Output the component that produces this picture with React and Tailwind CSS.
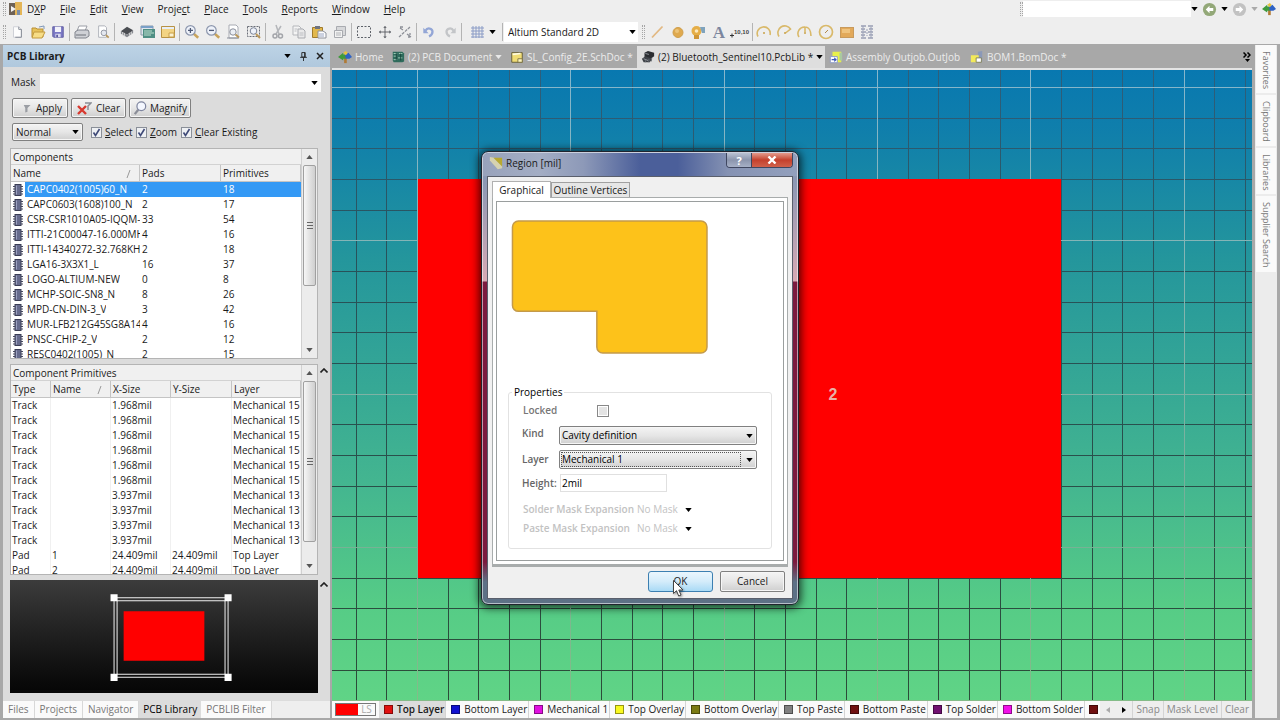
import React from "react";

const BUTTON =
  "flex items-center rounded-[2px] border border-[#808080] bg-gradient-to-b from-[#f4f4f4] via-[#e6e6e6] to-[#cfcfcf] shadow-[inset_0_0_0_1px_#f6f6f6]";

function Svg({ children, className = "size-4" }) {
  return (
    <svg viewBox="0 0 16 16" fill="none" aria-hidden="true" className={`shrink-0 ${className}`}>
      {children}
    </svg>
  );
}

function Caret({ className = "text-black" }) {
  return (
    <svg viewBox="0 0 7 4" aria-hidden="true" className={`h-1 w-[7px] shrink-0 ${className}`}>
      <path d="M0.3 0h6.4L3.5 4z" fill="currentColor" />
    </svg>
  );
}

/* ---------- icons ---------- */

const Arc = ({ d }) => (
  <Svg>
    <path d={d} stroke="#d9b96a" strokeWidth="1.6" />
    <circle cx="8" cy="9" r="1" fill="#c9a24a" />
  </Svg>
);

const Zoomer = ({ children }) => (
  <Svg>
    <path d="M9.6 9.6l4.6 4.2" stroke="#c9a45c" strokeWidth="2.6" />
    <circle cx="6.4" cy="6.4" r="4.8" fill="#eef2fa" stroke="#8d97ad" strokeWidth="1.2" />
    {children}
  </Svg>
);

const PcbIcon = () => (
  <Svg className="size-[14px]">
    <path d="M2 2h11l2 2v9l-2 1H3l-1-2z" fill="#2f6b5c" />
    <path d="M3 4h4M3 7h3M9 4h4M8 9h5M3 11h4" stroke="#a9d6c0" />
    <path d="M6 3v9M11 4v8" stroke="#17463b" />
  </Svg>
);

const HomeIcon = () => (
  <Svg className="size-[14px]">
    <path d="M7 7h3v8H7z" fill="#b07a35" />
    <path d="M0 8l6-5v2h3v5H6v2z" fill="#3f9a3c" />
    <path d="M16 8l-4-5-4 3 1 4h4z" fill="#2e62c4" />
    <path d="M6 3l3-2 2 2-2 3z" fill="#e8c33c" />
  </Svg>
);

const ChipStack = () => (
  <Svg className="size-[14px]">
    <path d="M1 7l7-5 7 4-7 5z" fill="#4a4d52" />
    <path d="M1 7v3l7 4v-3zM15 6v3l-7 5v-3z" fill="#85888e" />
    <path d="M3 8v4M5 9v4M11 9v3M13 8v3" stroke="#dcdcdc" />
  </Svg>
);

const LibIcon = () => (
  <Svg className="size-[14px]">
    <path d="M4 3l4-2 7 2v4l-4 3-7-2z" fill="#2b2d31" />
    <path d="M1 10l4-3 8 3-3 4H3z" fill="#3d4046" />
    <path d="M5 4l4 1M3 10l5 2" stroke="#9da1a8" />
    <path d="M12 9v4M9 10v4M5 11v3" stroke="#6b6f76" />
  </Svg>
);

const ChipIcon = () => (
  <svg viewBox="0 0 10 12" aria-hidden="true" className="h-3 w-[10px] shrink-0">
    <path d="M0 2.5h10M0 5h10M0 7.5h10M0 10h10" stroke="#4a4d63" />
    <rect x="2" y="0.5" width="6" height="11" fill="#666b8c" stroke="#3b3e55" />
    <path d="M3.5 1.5v9" stroke="#9ba0bf" />
  </svg>
);

const Undo = ({ color, flip }) => (
  <Svg className={flip ? "size-[14px] -scale-x-100" : "size-[14px]"}>
    <path d="M4 6.500c2-4 8-3 8 1.200 0 2.600-1.500 4.200-4 5.300" stroke={color} strokeWidth="2.600" />
    <path d="M1.500 3v6.500h6z" fill={color} />
  </Svg>
);

const ICONS = {
  newDoc: (
    <Svg className="size-[14px]">
      <path d="M4 2h6l3 3v9H4z" fill="#fdfdfd" stroke="#c9ccd2" />
      <path d="M10 2v3h3M13 5v9H6" stroke="#7d828e" />
    </Svg>
  ),
  open: (
    <Svg>
      <path d="M2 4h4l1 1h6v8H2z" fill="#e7c25a" stroke="#b98f35" />
      <path d="M4 8h11l-3 6H2z" fill="#f7dd86" stroke="#c29a3f" />
      <path d="M9 3l5-1v3" stroke="#7f97b8" />
    </Svg>
  ),
  save: (
    <Svg className="size-[14px]">
      <path d="M2 2h12v12H3l-1-1z" fill="#7a78c4" stroke="#5b599f" />
      <path d="M4.500 2h7v6h-7z" fill="#f2f2fa" />
      <path d="M5 10h6v4H5z" fill="#d9d9ee" />
      <path d="M6 11h2v3H6z" fill="#5b599f" />
    </Svg>
  ),
  print: (
    <Svg>
      <path d="M5 2h8l-2 5H3z" fill="#fff" stroke="#9b9ea6" />
      <path d="M1 8l3-2h10l1 2v4l-3 2H1z" fill="#cfd1d6" stroke="#80848d" />
      <path d="M2 11h10" stroke="#6d7179" />
    </Svg>
  ),
  preview: (
    <Svg className="size-[14px]">
      <path d="M3 1h7l2 2v11H3z" fill="#fff" stroke="#a8abb3" />
      <circle cx="9" cy="9" r="3.200" fill="#e4e8f0" stroke="#8a8f9b" />
      <path d="M11.500 11.500l3 3" stroke="#b9975a" strokeWidth="2" />
    </Svg>
  ),
  layers: <ChipStack />,
  board: (
    <Svg>
      <path d="M1 2h12v9H1z" fill="#dfe6ee" stroke="#8b98a8" />
      <path d="M3 5h12v9H3z" fill="#4f8f84" />
      <path d="M4 7h8M4 9h10M4 11h7" stroke="#bfe0cf" />
      <path d="M1 3h12" stroke="#7aa0c8" strokeWidth="2" />
    </Svg>
  ),
  sheet: (
    <Svg>
      <path d="M1.500 2.500h13v11h-13z" fill="#f3d483" stroke="#b89243" />
      <path d="M2 4h12" stroke="#e7eef7" strokeWidth="2" />
      <path d="M9 9h5v4H9z" fill="#fbf1cf" stroke="#c9a04a" />
    </Svg>
  ),
  zoomIn: <Zoomer><path d="M4 6.400h5M6.400 4v5" stroke="#4f5a75" strokeWidth="1.300" /></Zoomer>,
  zoomOut: <Zoomer><path d="M4 6.400h5" stroke="#4f5a75" strokeWidth="1.300" /></Zoomer>,
  zoomDoc: (
    <Svg>
      <path d="M4 1h7l2 2v11H4z" fill="#fff" stroke="#a8abb3" />
      <circle cx="8" cy="8" r="3.200" fill="#eceff5" stroke="#8a8f9b" />
      <path d="M2 14h12" stroke="#8a8f9b" />
      <path d="M10.500 10.500l3.500 3" stroke="#b9975a" strokeWidth="2" />
    </Svg>
  ),
  zoomArea: (
    <Svg>
      <path d="M1.500 2.500h12v10h-12z" stroke="#6b6f78" strokeDasharray="2 1" />
      <circle cx="7.500" cy="7" r="3.300" fill="#eef2fa" stroke="#7d869a" />
      <path d="M10 10l4 4" stroke="#b9975a" strokeWidth="2" />
    </Svg>
  ),
  cut: (
    <Svg>
      <path d="M6 1l3 9M11 2L6 10" stroke="#b4b6ba" strokeWidth="1.500" />
      <circle cx="5" cy="12" r="2" stroke="#a3a5aa" strokeWidth="1.500" />
      <circle cx="10.500" cy="12" r="2" stroke="#a3a5aa" strokeWidth="1.500" />
    </Svg>
  ),
  copy: (
    <Svg>
      <path d="M2 2h6l2 2v7H2z" fill="#f4f4f4" stroke="#b5b7bb" />
      <path d="M7 5h5l2 2v7H7z" fill="#e9e9ea" stroke="#a9abb0" />
      <path d="M8.500 9h4M8.500 11h4M3.500 5h3M3.500 7h2" stroke="#bcbec2" />
    </Svg>
  ),
  paste: (
    <Svg>
      <path d="M1.500 3.500h10v10h-10z" fill="#e2b84c" stroke="#a07b2d" />
      <path d="M4 2h5v3H4z" fill="#6f7480" />
      <path d="M7 7h5l3 2v5H7z" fill="#fdfdfd" stroke="#8d919b" />
      <path d="M8 10h5M8 12h5" stroke="#9aa6c4" />
    </Svg>
  ),
  pasteGrey: (
    <Svg>
      <path d="M4.500 2.500h9v9h-9z" fill="#d7d8da" stroke="#a9abb0" />
      <path d="M2.500 6.500h8v7h-8z" fill="#f2f2f2" stroke="#a9abb0" />
      <path d="M4 9h5M4 11h5" stroke="#b2b4b8" />
    </Svg>
  ),
  marquee: <Svg><path d="M1.500 2.500h13v11h-13z" stroke="#5d6168" strokeDasharray="2 1.500" /></Svg>,
  move: (
    <Svg className="size-[14px]">
      <path d="M8 2v12M2 8h12" stroke="#55585f" />
      <path d="M8 1l2 2H6zM8 15l2-2H6zM1 8l2-2v4zM15 8l-2-2v4z" fill="#55585f" />
    </Svg>
  ),
  deselect: (
    <Svg>
      <path d="M2 13L13 3" stroke="#8d9098" strokeWidth="1.300" strokeDasharray="3 1" />
      <path d="M3 4l3 2M10 10l4 3M11 13h2M3 3h3M13 9v2" stroke="#8d9098" strokeWidth="1.300" />
    </Svg>
  ),
  undo: <Undo color="#93a6d6" />,
  redo: <Undo color="#c3c5c8" flip />,
  grid: (
    <Svg>
      <path d="M4 2v12M7 2v12M10 2v12M13 2v12M2 4h13M2 7h13M2 10h13M2 13h13" stroke="#8b9cc6" />
    </Svg>
  ),
  line: <Svg><path d="M3 13.500L13.500 2.500" stroke="#e2b882" strokeWidth="1.800" /></Svg>,
  pad: <Svg><circle cx="8" cy="8.500" r="5" fill="#dfa94e" stroke="#cf9f4c" /><circle cx="7" cy="7" r="2" fill="#ecc47a" /></Svg>,
  via: (
    <Svg>
      <circle cx="6.500" cy="7" r="5" fill="#e5ae48" />
      <path d="M4 11h5v4H4z" fill="#cf9638" />
      <circle cx="6.500" cy="7" r="1.800" fill="#fbe9c0" />
      <path d="M10 3h5v6h-3z" fill="#7fa3bd" />
    </Svg>
  ),
  textA: (
    <svg viewBox="0 0 16 16" aria-hidden="true" className="size-4 shrink-0">
      <text x="8" y="14" textAnchor="middle" fontFamily="Liberation Serif, serif" fontWeight="700" fontSize="17" fill="#7c879f">A</text>
    </svg>
  ),
  coord: (
    <svg viewBox="0 0 20 16" aria-hidden="true" className="h-4 w-5 shrink-0">
      <path d="M0 11.500h4M2 9.500v4" stroke="#333" />
      <text x="4" y="10" fontFamily="Liberation Sans, sans-serif" fontWeight="700" fontSize="6" fill="#444">10,10</text>
    </svg>
  ),
  arc1: <Arc d="M2 12.500A6.500 6.500 0 1 1 14 11" />,
  arc2: <Arc d="M2 12.500A6.500 6.500 0 0 1 13.500 5l-5 4" />,
  arc3: <Arc d="M2 13A6.500 6.500 0 0 1 8 3c4 0 6 4 6 9M8 3v5" />,
  circle: (
    <Svg>
      <circle cx="8" cy="8" r="6.500" stroke="#d9b96a" strokeWidth="1.700" />
      <path d="M7 9l3-3" stroke="#b0894a" />
    </Svg>
  ),
  fill: <Svg><rect x="1.500" y="3.500" width="13" height="10" fill="#e2a95a" stroke="#c89a5c" /><path d="M3 5h8v4H3z" fill="#efc37e" /></Svg>,
  array: (
    <Svg>
      <path d="M2 2h5M2 5h4M2 8h5M2 11h4M2 14h5M9 2h5M10 5h4M9 8h5M10 11h4M9 14h5" stroke="#6f7796" />
      <path d="M4 2v12M12 3v11M8 5v7" stroke="#9aa1b8" strokeDasharray="2 1" />
    </Svg>
  ),
};

const TOOLBAR_LEFT = [
  ["newDoc", "open", "save"],
  ["print", "preview"],
  ["layers", "board", "sheet"],
  ["zoomIn", "zoomOut", "zoomDoc", "zoomArea"],
  ["cut", "copy", "paste", "pasteGrey"],
  ["marquee", "move", "deselect"],
  ["undo", "redo"],
];
const TOOLBAR_RIGHT = [
  ["line", "pad", "via", "textA", "coord"],
  ["arc1", "arc2", "arc3", "circle", "fill", "array"],
];

const Grip = () => <span className="h-[14px] w-[3px] shrink-0 border-x border-dotted border-[#a5a5a5]" />;
const Divider = () => <span className="h-[18px] w-px shrink-0 bg-[#b4b4b4]" />;

function ToolGroup({ names }) {
  return (
    <div className="flex">
      {names.map((n) => (
        <button key={n} aria-label={n} className="flex h-5 w-[21px] items-center justify-center [&:nth-child(3n)]:w-5">
          {ICONS[n]}
        </button>
      ))}
    </div>
  );
}

const MENUS = [
  ["D", "X", "P"], ["", "F", "ile"], ["", "E", "dit"], ["", "V", "iew"], ["Proje", "c", "t"],
  ["", "P", "lace"], ["", "T", "ools"], ["", "R", "eports"], ["", "W", "indow"], ["", "H", "elp"],
];

function NavArrow({ color, flip }) {
  return (
    <Svg className={flip ? "size-[15px] -scale-x-100" : "size-[15px]"}>
      <circle cx="8" cy="8" r="7" fill={color} />
      <path d="M8 4L4 8l4 4V9.500h4v-3H8z" fill="#fff" />
    </Svg>
  );
}

function MenuBar() {
  return (
    <div className="flex h-[18px] items-center pl-[3px]">
      <Grip />
      <nav className="flex items-center leading-4">
        <Svg className="ml-[2px] mr-[3px] size-4">
          <path d="M1 2h9v12H1z" fill="#6e6257" />
          <path d="M7 1h7v13H7z" fill="#e4b557" />
          <path d="M3 5l5 3-5 3z" fill="#f3f3f3" />
          <path d="M9 9h3v5H9z" fill="#7c8ea8" />
        </Svg>
        <div className="flex gap-[14px]">
          {MENUS.map(([a, u, b]) => (
            <button key={a + u + b}>
              {a}<span className="underline underline-offset-1">{u}</span>{b}
            </button>
          ))}
        </div>
      </nav>
      <div className="ml-auto flex h-full items-center pr-1">
        <Grip />
        <input aria-label="Address" className="h-4 w-[168px] bg-white" />
        <div className="flex h-full items-center gap-1">
          <Caret />
          <NavArrow color="#93a878" />
          <Caret />
          <NavArrow color="#c2c2c2" flip />
          <Caret className="text-[#aaa]" />
          <HomeIcon />
        </div>
      </div>
    </div>
  );
}

function Toolbar() {
  return (
    <div className="flex h-[26px] items-center pl-[3px] pt-px">
      <Grip />
      {TOOLBAR_LEFT.map((g, i) => (
        <React.Fragment key={i}>
          {i > 0 && <span className="px-px"><span className="block h-[18px] w-px bg-[#b4b4b4]" /></span>}
          <ToolGroup names={g} />
        </React.Fragment>
      ))}
      <span className="px-px"><span className="block h-[18px] w-px bg-[#b4b4b4]" /></span>
      <button aria-label="Grid" className="flex w-[39px] items-center justify-center gap-1">
        {ICONS.grid}<Caret />
      </button>
      <Divider />
      <div className="relative ml-px w-[134px]">
        <select aria-label="View configuration" className="h-[20px] w-full appearance-none bg-white pl-1 leading-5">
          <option>Altium Standard 2D</option>
        </select>
        <span className="pointer-events-none absolute right-[2px] top-2"><Caret /></span>
      </div>
      <span className="ml-1 mr-px"><span className="block h-[14px] w-[3px] border-x border-dotted border-[#a5a5a5]" /></span>
      <ToolGroup names={TOOLBAR_RIGHT[0]} />
      <span className="pl-[2px]"><span className="block h-[18px] w-px bg-[#b4b4b4]" /></span>
      <ToolGroup names={TOOLBAR_RIGHT[1]} />
    </div>
  );
}

/* ---------- library panel ---------- */

const COMPONENTS = [
  ["CAPC0402(1005)60_N", 2, 18], ["CAPC0603(1608)100_N", 2, 17], ["CSR-CSR1010A05-IQQM-", 33, 54],
  ["ITTI-21C00047-16.000MHZ", 4, 16], ["ITTI-14340272-32.768KHZ", 2, 18], ["LGA16-3X3X1_L", 16, 37],
  ["LOGO-ALTIUM-NEW", 0, 8], ["MCHP-SOIC-SN8_N", 8, 26], ["MPD-CN-DIN-3_V", 3, 42],
  ["MUR-LFB212G45SG8A143", 4, 16], ["PNSC-CHIP-2_V", 2, 12], ["RESC0402(1005)_N", 2, 15],
];

const track = (size, layer) => ["Track", "", size, "", layer];
const PRIMITIVES = [
  ...Array.from({ length: 6 }, () => track("1.968mil", "Mechanical 15")),
  ...Array.from({ length: 4 }, () => track("3.937mil", "Mechanical 13")),
  ["Pad", "1", "24.409mil", "24.409mil", "Top Layer"],
  ["Pad", "2", "24.409mil", "24.409mil", "Top Layer"],
];

function ScrollBar({ thumb }) {
  return (
    <div aria-hidden="true" className="flex w-4 shrink-0 flex-col items-center border-l border-[#d0d0d0] bg-[#ececec]">
      <span className="flex h-4 shrink-0 items-center"><Caret className="rotate-180 text-[#555]" /></span>
      <span className={`flex w-[13px] items-center justify-center rounded-[2px] border border-[#a0a0a0] bg-gradient-to-r from-[#f6f6f6] to-[#cfcfcf] ${thumb}`}>
        <span className="h-[7px] w-[6px] border-y border-[#666] py-[2px]"><span className="block h-px bg-[#666]" /></span>
      </span>
      <span className="mt-auto flex h-4 shrink-0 items-center"><Caret className="text-[#555]" /></span>
    </div>
  );
}

const TH = "border-b border-r border-[#c4c4c4] bg-[#f0f0f0] p-0 pl-[2px] text-left font-normal";

function SortTh({ children }) {
  return (
    <th className={TH}>
      <span className="flex justify-between pr-2">
        {children}
        <svg viewBox="0 0 5 8" aria-hidden="true" className="mt-1 h-2 w-[5px]"><path d="M1 8L4 0" stroke="#999" /></svg>
      </span>
    </th>
  );
}

function ListBox({ title, thumb, children }) {
  return (
    <div className="flex h-[211px] shrink-0 border border-[#b4b4b4] bg-white">
      <div className="min-w-0 flex-1 overflow-hidden">
        <h2 className="h-4 border-b border-[#d2d2d2] bg-[#f0f0f0] pl-[2px] leading-4">{title}</h2>
        {children}
      </div>
      <ScrollBar thumb={thumb} />
    </div>
  );
}

function Check({ label, u, className = "" }) {
  return (
    <label className={`flex items-center gap-[3px] ${className}`}>
      <span className="grid place-items-center">
        <input type="checkbox" defaultChecked className="peer col-start-1 row-start-1 size-[11px] appearance-none border border-[#8a8f98] bg-[#eef0f3]" />
        <svg viewBox="0 0 9 9" aria-hidden="true" className="pointer-events-none invisible col-start-1 row-start-1 size-[9px] peer-checked:visible">
          <path d="M1.500 4.500l2 3L7.500 1" fill="none" stroke="#3f4a78" strokeWidth="1.600" />
        </svg>
      </span>
      <span><span className="underline underline-offset-1">{u}</span>{label}</span>
    </label>
  );
}

const Chevron = () => (
  <svg viewBox="0 0 8 5" aria-hidden="true" className="h-[5px] w-2"><path d="M0.500 4.500L4 1l3.500 3.500" fill="none" stroke="#222" strokeWidth="1.600" /></svg>
);

function LibraryPanel() {
  return (
    <aside className="flex w-[332px] shrink-0 flex-col border-l-[3px] border-r-2 border-[#a8a8a8] bg-[#dcdcdc]">
      <header className="flex h-[22px] shrink-0 items-center bg-gradient-to-b from-[#bdd3e6] to-[#b0c8dd] pl-1 pr-[6px]">
        <h1 className="font-bold">PCB Library</h1>
        <div className="ml-auto flex items-center gap-2">
          <button aria-label="Menu"><Caret /></button>
          <button aria-label="Pin"><Svg className="size-[9px]"><path d="M5 1h6v8H5zM2 9.500h12M8 10v6M10 1v8" stroke="#222" strokeWidth="1.600" /></Svg></button>
          <button aria-label="Close"><Svg className="size-2"><path d="M2 2l12 12M14 2L2 14" stroke="#222" strokeWidth="3" /></Svg></button>
        </div>
      </header>

      <div className="flex h-[31px] shrink-0 items-center pl-2 pr-[9px]">
        <label htmlFor="mask" className="w-[29px]">Mask</label>
        <div className="flex h-[18px] flex-1 items-center bg-white pr-[3px]">
          <input id="mask" className="min-w-0 flex-1" />
          <button aria-label="Mask history"><Caret /></button>
        </div>
      </div>
      <div className="flex h-5 shrink-0 gap-[3px] pl-[9px] [&>button]:h-5">
        <button className={`${BUTTON} w-[56px] justify-end pr-[5px]`}>
          <Svg className="mr-1 size-3"><path d="M5 4h9l-4 4v5l-3 1V8z" fill="#9a9da3" /></Svg>Apply
        </button>
        <button className={`${BUTTON} w-[55px] justify-end pr-[5px]`}>
          <Svg className="mr-1 size-4"><path d="M2 6l8 8M10 6l-8 8" stroke="#d8392f" strokeWidth="2.400" /><path d="M9 3h6l-3 3v4" stroke="#8a8d95" strokeWidth="1.500" /></Svg>Clear
        </button>
        <button className={`${BUTTON} w-[62px] justify-end pr-[3px]`}>
          <Svg className="mr-[3px] size-[14px]"><path d="M6 10l-4 5" stroke="#8b8e98" strokeWidth="2.600" /><circle cx="9.500" cy="6" r="5" fill="#f4f7ff" stroke="#7f86a0" strokeWidth="1.400" /></Svg>Magnify
        </button>
      </div>
      <div className="mt-[5px] flex h-[18px] shrink-0 items-center pl-[9px]">
        <div className="relative mr-2 w-[71px]">
          <select aria-label="Mode" className={`${BUTTON} h-[18px] w-full appearance-none pl-[3px]`}>
            <option>Normal</option>
          </select>
          <span className="pointer-events-none absolute right-1 top-[7px]"><Caret /></span>
        </div>
        <Check u="S" label="elect" className="w-[45px]" />
        <Check u="Z" label="oom" className="w-[45px]" />
        <Check u="C" label="lear Existing" />
      </div>

      <div className="mt-[7px] flex min-h-0 flex-1 flex-col gap-[5px] pl-[7px]">
        <div className="flex shrink-0">
          <div className="w-[308px]">
            <ListBox title="Components" thumb="h-[121px]">
              <table className="w-full table-fixed border-separate border-spacing-0 leading-[15px]">
                <colgroup><col className="w-[129px]" /><col className="w-[81px]" /><col /></colgroup>
                <thead><tr className="h-[17px]"><SortTh>Name</SortTh><th className={TH}>Pads</th><th className={TH}>Primitives</th></tr></thead>
                <tbody>
                  {COMPONENTS.map(([name, pads, prims], i) => (
                    <tr key={name} className={i === 0 ? "bg-[#3399f5] text-white" : "bg-white"}>
                      <td className="overflow-hidden p-0">
                        <span className="flex h-[15px] items-center">
                          <span className={i === 0 ? "flex h-[15px] w-[14px] shrink-0 items-center bg-white pl-[2px]" : "flex h-[15px] w-[14px] shrink-0 items-center pl-[2px]"}><ChipIcon /></span>
                          <span className="min-w-0 overflow-hidden pl-[2px]">{name}</span>
                        </span>
                      </td>
                      <td className="p-0 pl-[2px]">{pads}</td>
                      <td className="p-0 pl-[2px]">{prims}</td>
                    </tr>
                  ))}
                </tbody>
              </table>
            </ListBox>
          </div>
        </div>
        <div className="flex shrink-0">
          <div className="w-[308px]">
            <ListBox title="Component Primitives" thumb="h-[161px]">
              <table className="w-full table-fixed border-separate border-spacing-0 leading-[15px]">
                <colgroup><col className="w-[40px]" /><col className="w-[60px]" /><col className="w-[60px]" /><col className="w-[61px]" /><col /></colgroup>
                <thead>
                  <tr className="h-[17px]">
                    <th className={TH}>Type</th><SortTh>Name</SortTh><th className={TH}>X-Size</th><th className={TH}>Y-Size</th><th className={TH}>Layer</th>
                  </tr>
                </thead>
                <tbody>
                  {PRIMITIVES.map((row, i) => (
                    <tr key={i} className="h-[15px]">
                      {row.map((c, j) => <td key={j} className="border-r border-[#f0f0f0] p-0 pl-px">{c}</td>)}
                    </tr>
                  ))}
                </tbody>
              </table>
            </ListBox>
          </div>
          <button aria-label="Collapse primitives" className="flex h-3 flex-1 items-center justify-center"><Chevron /></button>
        </div>
        <div className="flex min-h-0 flex-1">
          <div className="w-[308px] bg-gradient-to-b from-[#3c3c3c] to-[#060606]">
            <svg viewBox="0 0 308 112" preserveAspectRatio="xMidYMid slice" className="h-full w-full" role="img" aria-label="Preview">
              <g fill="none" stroke="#f0f0f0"><path d="M104.500 17.500h113v79h-113zM107.500 20.500h107v73h-107z" /></g>
              <path d="M114 31h80v49h-80z" fill="#f00" />
              <path d="M101 14h7v7h-7zM214 14h7v7h-7zM101 93h7v7h-7zM214 93h7v7h-7z" fill="#fff" />
            </svg>
          </div>
          <button aria-label="Collapse preview" className="flex h-2 flex-1 items-center justify-center"><Chevron /></button>
        </div>
      </div>

      <nav className="mt-2 flex h-[17px] shrink-0 bg-[#eee] text-[#777]">
        {["Files", "Projects", "Navigator", "PCB Library", "PCBLIB Filter"].map((t) => (
          <button key={t} className={t === "PCB Library" ? "bg-[#dcdcdc] px-1 text-black" : "border-r border-[#d8d8d8] bg-[#fafafa] px-[5px]"}>{t}</button>
        ))}
      </nav>
    </aside>
  );
}

/* ---------- documents ---------- */

const SheetIcon = () => (
  <Svg className="size-[14px]"><path d="M2 3h12v11H2z" fill="#f0dc74" stroke="#5e5634" /><path d="M3 5l9-1" stroke="#fffbe0" strokeWidth="2" /><path d="M9 10h5v4H9z" fill="#fff6bd" stroke="#7a7040" /></Svg>
);
const OutIcon = () => (
  <Svg className="size-[14px]"><path d="M4 2h10v12H4z" fill="#e8f04a" /><path d="M12 3h3v9h-3z" fill="#a9c9a0" /><path d="M1.500 7.500h8v7h-8z" fill="#fff" stroke="#8796c8" /><path d="M3 11h5M6 9l2 2-2 2" stroke="#3b57b8" strokeWidth="1.300" /></Svg>
);
const BomIcon = () => (
  <Svg className="size-[14px]"><path d="M9 2l5-1v12l-5 1z" fill="#8b99b8" /><path d="M1 6h9v8H1z" fill="#f3ea5a" /><path d="M7 9h6v5H7z" fill="#fff" stroke="#7a7a52" /></Svg>
);

function DocTabs() {
  const tab = "flex shrink-0 items-center gap-[3px] text-[#ececec]";
  return (
    <div className="flex h-[23px] shrink-0 items-center bg-[#a8a8a8] pr-px pt-px">
      <button className={`${tab} w-[59px] pl-[6px]`}><HomeIcon />Home</button>
      <button className={`${tab} w-[119px]`}><PcbIcon />(2) PCB Document<span className="ml-auto mr-2"><Caret className="text-[#e9e9e9]" /></span></button>
      <button className={`${tab} w-[127px]`}><SheetIcon />SL_Config_2E.SchDoc *</button>
      <button className="flex h-full w-[188px] shrink-0 items-center gap-[3px] bg-[#dedede] pl-1"><LibIcon />(2) Bluetooth_Sentinel10.PcbLib *<span className="ml-auto mr-[3px]"><Caret /></span></button>
      <button className={`${tab} w-[145px] pl-1`}><OutIcon />Assembly Outjob.OutJob</button>
      <button className={tab}><BomIcon />BOM1.BomDoc *</button>
      <button aria-label="More documents" className="ml-auto flex flex-col items-center gap-px">
        <svg viewBox="0 0 8 6" aria-hidden="true" className="h-[6px] w-2"><path d="M0.500 0.500L3 3 0.500 5.500M4.500 0.500L7 3 4.500 5.500" fill="none" stroke="#000" strokeWidth="1.500" /></svg>
        <svg viewBox="0 0 5 3" aria-hidden="true" className="h-[3px] w-[5px]"><path d="M0 0h5L2.500 3z" /></svg>
      </button>
    </div>
  );
}

/* Grid lines every 30.66 units, snapped to whole pixels; every fifth is a major line. */
const GRID_STEP = 30.66;
const GRID_INDEXES = Array.from({ length: 90 }, (_, i) => i - 2);
const gridPath = (major) =>
  GRID_INDEXES.filter((i) => (i % 5 === 0) === major)
    .map((i) => {
      const d = Math.round(i * GRID_STEP) + 0.5;
      return `M${85 + d} 0v2000M0 ${17 + d}h3000`;
    })
    .join("");
const MINOR_GRID = gridPath(false);
const MAJOR_GRID = gridPath(true);

function Board() {
  return (
    <svg className="absolute inset-0 h-full w-full" role="img" aria-label="Board">
      <defs>
        <linearGradient id="sky" x1="0" y1="0" x2="0" y2="1">
          <stop offset="0" stopColor="#0878b0" />
          <stop offset="0.100" stopColor="#107fab" />
          <stop offset="0.300" stopColor="#24969c" />
          <stop offset="0.650" stopColor="#43b590" />
          <stop offset="0.850" stopColor="#56cc86" />
          <stop offset="1" stopColor="#60d486" />
        </linearGradient>
        <linearGradient id="minor" gradientUnits="userSpaceOnUse" x1="0" y1="0" x2="0" y2="631">
          <stop offset="0" stopColor="#2f5f7c" />
          <stop offset="0.300" stopColor="#28525a" />
          <stop offset="1" stopColor="#2c4c38" />
        </linearGradient>
        <linearGradient id="major" gradientUnits="userSpaceOnUse" x1="0" y1="0" x2="0" y2="631">
          <stop offset="0" stopColor="#86b6cc" />
          <stop offset="0.400" stopColor="#84b4ac" />
          <stop offset="0.700" stopColor="#74b098" />
          <stop offset="1" stopColor="#84bc88" />
        </linearGradient>
      </defs>
      <rect width="100%" height="100%" fill="url(#sky)" />
      <path d={MINOR_GRID} stroke="url(#minor)" />
      <path d={MAJOR_GRID} stroke="url(#major)" />
      <rect x="86" y="109" width="643" height="399" fill="#f00" />
      <text x="501" y="330" textAnchor="middle" fontFamily="Liberation Sans, sans-serif" fontWeight="700" fontSize="16" fill="#e8b0a8">2</text>
    </svg>
  );
}

const LAYERS = [
  ["Top Layer", "bg-[#e01010]"], ["Bottom Layer", "bg-[#1010d0]"], ["Mechanical 1", "bg-[#e010e0]"],
  ["Top Overlay", "bg-[#f8f820]"], ["Bottom Overlay", "bg-[#7a7a14]"], ["Top Paste", "bg-[#808080]"],
  ["Bottom Paste", "bg-[#701010]"], ["Top Solder", "bg-[#701070]"], ["Bottom Solder", "bg-[#f010e8]"],
];
const SQUARE = "size-[9px] shrink-0 border border-black/40";

function LayerBar() {
  return (
    <div className="flex h-[17px] shrink-0 items-stretch bg-[#fafafa]">
      <div className="flex w-[47px] shrink-0 items-center pl-[3px]">
        <button className="flex h-[13px] w-[41px] items-center border border-[#777] text-[#aaa]">
          <span className="h-full w-[22px] bg-[#f00]" /><span className="flex-1 text-center">LS</span>
        </button>
      </div>
      <div className="flex min-w-0 flex-1 overflow-hidden">
        {LAYERS.map(([name, color], i) => (
          <button key={name} className={`flex shrink-0 items-center gap-1 border-r border-[#d4d4d4] pl-[5px] pr-px ${i === 0 ? "bg-[#dcdcdc] font-semibold" : ""}`}>
            <span className={`${SQUARE} ${color}`} />{name}
          </button>
        ))}
        <span className="flex shrink-0 items-center pl-1"><span className={`${SQUARE} bg-[#701010]`} /></span>
      </div>
      <div className="flex shrink-0 bg-[#eee] text-[#888]">
        <button aria-label="Scroll left" className="flex w-4 items-center justify-center"><svg viewBox="0 0 4 6" className="h-[6px] w-1"><path d="M4 0v6L0 3z" fill="#aaa" /></svg></button>
        <button aria-label="Scroll right" className="flex w-4 items-center justify-center"><svg viewBox="0 0 4 6" className="h-[6px] w-1"><path d="M0 0v6l4-3z" fill="#000" /></svg></button>
        {["Snap", "Mask Level", "Clear"].map((t) => <button key={t} className="border-l border-[#d4d4d4] px-[3px]">{t}</button>)}
      </div>
    </div>
  );
}

/* ---------- region dialog ---------- */

function FormSelect({ id, value, focused }) {
  return (
    <div className="relative w-[198px]">
      <select id={id} className={`${BUTTON} h-[19px] w-full appearance-none pl-[2px] font-normal text-black`}><option>{value}</option></select>
      {focused && <span className="pointer-events-none absolute bottom-[2px] left-[2px] right-4 top-[2px] border border-dotted border-[#555]" />}
      <span className="pointer-events-none absolute right-1 top-2"><Caret /></span>
    </div>
  );
}

function MaskRow({ id, label }) {
  return (
    <div className="flex h-[19px] items-center pl-[14px] text-[#c2c2c2]">
      <label htmlFor={id} className="w-[114px] font-semibold">{label}</label>
      <div className="relative w-[55px]">
        <select id={id} disabled className="w-full appearance-none text-[#c2c2c2] opacity-100"><option>No Mask</option></select>
        <span className="pointer-events-none absolute right-0 top-[6px]"><Caret /></span>
      </div>
    </div>
  );
}

function RegionDialog() {
  return (
    <section role="dialog" aria-label="Region [mil]" className="absolute left-[149px] top-[81px] w-[318px] rounded-[7px] border border-[#20242e] bg-[linear-gradient(to_bottom,#8c98b4_0,#8c98b4_30px,#d8aab4_129px,#7c1a3e_130px,#7c1a3e_410px,#5d7186_430px,#5d7186_100%)] px-[5px] pb-[5px] shadow-[0_1px_8px_2px_rgba(0,0,0,0.7),inset_0_0_0_1px_rgba(255,255,255,0.55)]">
      <header className="-mx-1 mt-px flex h-[23px] items-start rounded-t-[6px] bg-[linear-gradient(to_right,#98a2bb_0%,#a3adc4_18%,#8d99b8_32%,#4b5f9a_50%,#4b5f9a_62%,#8592b3_78%,#93a0bd_100%)] pl-[6px] pr-1">
        <div className="flex items-center gap-[3px] pt-[2px] leading-4">
          <Svg className="size-[14px]"><path d="M1 1l5 1 9 9v3l-5 1-9-10z" fill="#d6d2b0" /><path d="M5 2h10v10z" fill="#b8a932" /></Svg>
          <h2>Region [mil]</h2>
        </div>
        <div className="ml-auto flex h-[15px] overflow-hidden rounded-b-[4px] border border-t-0 border-[#3f4760]">
          <button aria-label="Help" className="flex w-[25px] items-center justify-center border-r border-[#3f4760] bg-gradient-to-b from-[#b9c1d2] via-[#8b95ad] to-[#a6b0c6] text-[11px] font-bold text-white">?</button>
          <button aria-label="Close" className="flex w-10 items-center justify-center bg-gradient-to-b from-[#e39a8c] via-[#c4402c] to-[#d0604a]">
            <svg viewBox="0 0 10 8" className="h-2 w-[10px]"><path d="M1.500 0.500l7 7M8.500 0.500l-7 7" stroke="#fff" strokeWidth="2.400" /></svg>
          </button>
        </div>
      </header>

      <div className="border border-[#5a5f6c] bg-[#f0f0f0] px-1 pb-[6px] pt-1">
        <div role="tablist" className="flex items-end">
          <button role="tab" aria-selected="true" className="relative -mb-px h-[17px] w-[59px] border border-b-0 border-[#b0b0b0] bg-white">Graphical</button>
          <button role="tab" aria-selected="false" className="h-[15px] w-[79px] border border-b-0 border-[#a0a0a0] bg-[#e6e6e6] leading-[14px]">Outline Vertices</button>
        </div>
        <div className="border border-b-[3px] border-[#a8acac] bg-white p-[3px]">
          <div className="border border-[#9a9e9e] px-[11px] pb-[11px]">
            <svg viewBox="0 0 266 184" className="h-[184px] w-full" role="img" aria-label="Region outline">
              <path d="M10.500 18.500h184a6 6 0 0 1 6 6v121a6 6 0 0 1-6 6h-99a6 6 0 0 1-6-6v-36h-79a6 6 0 0 1-6-6v-79a6 6 0 0 1 6-6z" fill="#fdc21a" stroke="#c49a4a" strokeWidth="1.500" />
            </svg>
            <fieldset className="h-[163px] rounded-[3px] border border-[#e2e2e2] text-[#555]">
              <legend className="ml-[3px] h-3 px-[2px] leading-3 text-black">Properties</legend>
              <div className="flex h-[25px] items-center pl-[14px]">
                <label htmlFor="locked" className="w-[74px] font-semibold text-[#777]">Locked</label>
                <input id="locked" type="checkbox" className="size-3 appearance-none border border-[#888] bg-[#e4e4e4] shadow-[inset_0_0_0_1px_#fff]" />
              </div>
              <div className="flex flex-col gap-[5px] pl-[13px] pt-[3px] font-semibold text-[#666]">
                <div className="flex items-center"><label htmlFor="kind" className="w-[37px] pb-1">Kind</label><FormSelect id="kind" value="Cavity definition" /></div>
                <div className="flex items-center"><label htmlFor="layer" className="w-[37px]">Layer</label><FormSelect id="layer" value="Mechanical 1" focused /></div>
                <div className="flex items-center"><label htmlFor="height" className="w-[38px]">Height:</label><input id="height" defaultValue="2mil" className="h-[18px] w-[107px] border border-[#e0e0e0] pl-px font-normal text-black" /></div>
              </div>
              <div className="pt-2">
                <MaskRow id="solder" label="Solder Mask Expansion" />
                <MaskRow id="paste" label="Paste Mask Expansion" />
              </div>
            </fieldset>
          </div>
        </div>
        <div className="flex justify-end gap-[7px] pr-[3px] pt-1">
          <button className="relative h-[21px] w-[65px] rounded-[3px] border border-[#3c7fb1] bg-gradient-to-b from-[#eaf6fd] via-[#d4ecfa] to-[#a9daf5]">
            OK
            <svg viewBox="0 0 12 18" aria-hidden="true" className="absolute left-6 top-2 h-[18px] w-3 drop-shadow-[1px_1px_1px_rgba(0,0,0,0.4)]">
              <path d="M0.500 0.500v13l3-2.800 2.200 5.300 2.300-1-2.200-5h4.200z" fill="#fff" stroke="#444" />
            </svg>
          </button>
          <button className={`${BUTTON} h-[21px] w-[65px] justify-center`}>Cancel</button>
        </div>
      </div>
    </section>
  );
}

function SideTabs() {
  return (
    <aside className="flex w-7 shrink-0 border-l-[3px] border-r-[3px] border-[#a8a8a8] bg-[#ececec] pl-px">
      <nav className="flex w-[20px] flex-col gap-[2px] text-[9px] leading-5 text-[#777]">
        {["Favorites", "Clipboard", "Libraries", "Supplier Search"].map((t) => (
          <button key={t} className="w-[20px] bg-[#fafafa] pb-1 pt-[6px] [writing-mode:vertical-rl]">{t}</button>
        ))}
      </nav>
    </aside>
  );
}

export default function App() {
  return (
    <div className="flex h-screen flex-col overflow-hidden whitespace-nowrap bg-[#eee] font-['Open_Sans','Noto_Sans',sans-serif] text-[10px] leading-[15px] text-[#1a1a1a]">
      <MenuBar />
      <Toolbar />
      <main className="flex min-h-0 flex-1 border-b-2 border-t border-[#a8a8a8]">
        <LibraryPanel />
        <div className="flex min-w-0 flex-1 flex-col">
          <DocTabs />
          <div className="relative min-h-0 flex-1 overflow-hidden border-t-2 border-[#e4e4e4]">
            <Board />
            <RegionDialog />
          </div>
          <LayerBar />
        </div>
        <SideTabs />
      </main>
    </div>
  );
}
